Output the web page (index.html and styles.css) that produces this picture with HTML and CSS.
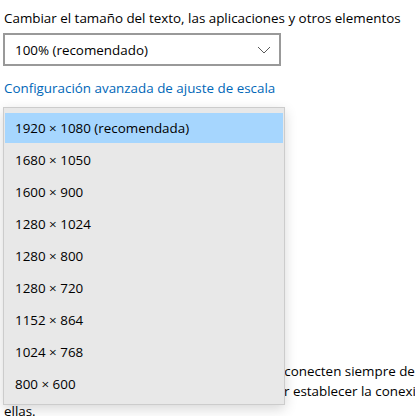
FILE: index.html
```html
<!DOCTYPE html>
<html lang="es">
<head>
<meta charset="utf-8">
<link rel="stylesheet" href="styles.css">
</head>
<body>
<div class="page">
  <p class="label">Cambiar el tamaño del texto, las aplicaciones y otros elementos</p>
  <div class="select">
    <span class="select-value">100% (recomendado)</span>
    <svg class="chevron" width="14" height="8" viewBox="0 0 14 8"><path d="M1 1 L7 7 L13 1" fill="none" stroke="#5a5a5a" stroke-width="1"/></svg>
  </div>
  <a class="link" href="#">Configuración avanzada de ajuste de escala</a>
  <div class="spacer"></div>
  <p class="para"><span class="lead">Es posible que las pantallas más antiguas no se </span>conecten siempre de forma<br><span class="lead2">automática. Selecciona Detectar para intentar </span>establecer la conexión con<br>ellas.</p>

  <ul class="menu">
    <li class="item selected">1920 × 1080 (recomendada)</li>
    <li class="item">1680 × 1050</li>
    <li class="item">1600 × 900</li>
    <li class="item">1280 × 1024</li>
    <li class="item">1280 × 800</li>
    <li class="item">1280 × 720</li>
    <li class="item">1152 × 864</li>
    <li class="item">1024 × 768</li>
    <li class="item">800 × 600</li>
  </ul>
</div>
</body>
</html>
```

FILE: styles.css
```css
html, body {
  margin: 0;
  padding: 0;
  background: #ffffff;
  overflow: hidden;
}
body {
  font-family: "Open Sans", "Noto Sans", sans-serif;
  font-size: 13.4px;
  color: #000;
  width: 415px;
  height: 416px;
}
.page {
  position: relative;
  padding: 8px 0 0 4px;
  height: 408px;
  white-space: nowrap;
}
.label {
  margin: 0;
  line-height: 20px;
}
.select {
  margin: 5px 0 0 -1px;
  width: 256px;
  height: 29px;
  border: 2px solid #999999;
  display: flex;
  align-items: center;
  justify-content: space-between;
  padding: 0 8px 0 10px;
}
.select-value {
  line-height: 20px;
}
.chevron {
  display: block;
}
.link {
  display: block;
  margin-top: 12px;
  line-height: 20px;
  color: #0067b8;
  text-decoration: none;
}
.spacer {
  height: 263px;
}
.para {
  margin: 0;
  line-height: 20px;
  width: 700px;
}
.lead {
  letter-spacing: -0.36px;
}
.lead2 {
  letter-spacing: 0;
}
.menu {
  position: absolute;
  left: 3px;
  top: 107px;
  margin: 0;
  list-style: none;
  width: 278px;
  padding: 5px 1px 5px 1px;
  background: #e8e8e8;
  border: 1px solid #cccccc;
  box-shadow: 0 4px 12px rgba(0,0,0,0.16);
  display: flex;
  flex-direction: column;
  gap: 2px;
}
.item {
  height: 30px;
  line-height: 30px;
  padding-left: 10px;
}
.item.selected {
  background: #a6d6fe;
}
```
